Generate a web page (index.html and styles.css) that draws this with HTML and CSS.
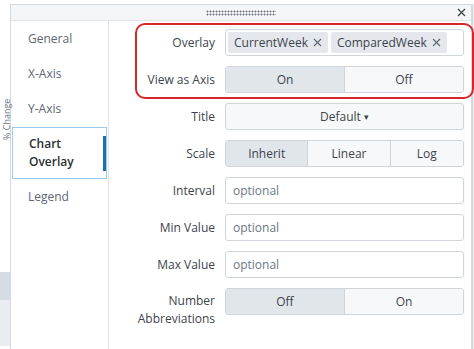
FILE: index.html
```html
<!DOCTYPE html>
<html lang="en">

<head>
    <meta charset="UTF-8">
    <title>Chart Overlay settings</title>
    <link rel="stylesheet" href="styles.css">
</head>

<body>
    <div class="page">
        <div class="gutter-left">
            <span class="axis-title">% Change</span>
            <div class="gutter-rows">
                <div class="gutter-row dark"></div>
                <div class="gutter-row"></div>
            </div>
        </div>

        <div class="dialog">
            <div class="dialog-header">
                <span class="grip"></span>
                <svg class="close" width="9" height="9" viewBox="0 0 9 9">
                    <path d="M1 1L8 8M8 1L1 8" stroke="#3c444d" stroke-width="1.3" />
                </svg>
            </div>
            <div class="dialog-body">
                <ul class="nav">
                    <li>General</li>
                    <li>X-Axis</li>
                    <li>Y-Axis</li>
                    <li class="active">Chart<br>Overlay</li>
                    <li>Legend</li>
                </ul>

                <div class="form">
                    <div class="highlight"></div>

                    <div class="row">
                        <label>Overlay</label>
                        <div class="tags">
                            <span class="tag">CurrentWeek
                                <svg width="9" height="9" viewBox="0 0 9 9"><path d="M1 1L8 8M8 1L1 8" stroke="#5c6773" stroke-width="1.1" /></svg>
                            </span>
                            <span class="tag">ComparedWeek
                                <svg width="9" height="9" viewBox="0 0 9 9"><path d="M1 1L8 8M8 1L1 8" stroke="#5c6773" stroke-width="1.1" /></svg>
                            </span>
                        </div>
                    </div>
                    <div class="row">
                        <label>View as Axis</label>
                        <div class="toggle">
                            <button class="selected">On</button>
                            <button>Off</button>
                        </div>
                    </div>
                    <div class="row">
                        <label>Title</label>
                        <button class="dropdown">Default <span class="caret">&#9662;</span></button>
                    </div>
                    <div class="row">
                        <label>Scale</label>
                        <div class="toggle three">
                            <button class="selected">Inherit</button>
                            <button>Linear</button>
                            <button>Log</button>
                        </div>
                    </div>
                    <div class="row">
                        <label>Interval</label>
                        <input class="text-input" placeholder="optional">
                    </div>
                    <div class="row">
                        <label>Min Value</label>
                        <input class="text-input" placeholder="optional">
                    </div>
                    <div class="row">
                        <label>Max Value</label>
                        <input class="text-input" placeholder="optional">
                    </div>
                    <div class="row">
                        <label class="two-line">Number<br>Abbreviations</label>
                        <div class="toggle">
                            <button class="selected">Off</button>
                            <button>On</button>
                        </div>
                    </div>
                </div>
            </div>
        </div>

        <div class="gutter-right"></div>
    </div>
</body>

</html>
```

FILE: styles.css
```css
body {
    margin: 0;
    font-family: 'Open Sans', Lato, Arial, sans-serif;
    font-size: 12px;
    color: #3c444d;
    background: #fff;
    overflow: hidden;
}

.page {
    display: flex;
    height: 349px;
    padding-top: 4px;
    box-sizing: border-box;
}

.gutter-left {
    width: 10px;
    flex: none;
    display: flex;
    flex-direction: column;
}

.axis-title {
    writing-mode: vertical-rl;
    transform: rotate(180deg);
    font-size: 9px;
    color: #6b7785;
    margin: 90px 0 0 0;
    height: 46px;
    white-space: nowrap;
}

.gutter-rows {
    margin-top: 132px;
    display: flex;
    flex-direction: column;
}

.gutter-row {
    height: 46px;
    background: #e9edf1;
}

.gutter-row.dark {
    height: 28px;
    background: #d6dce3;
}

.gutter-right {
    flex: 1;
    background: #eef0f2;
    border-left: 1px solid #d3d8dd;
}

.dialog {
    width: 460px;
    flex: none;
    border: 1px solid #d5dade;
    border-bottom: none;
    display: flex;
    flex-direction: column;
}

.dialog-header {
    height: 15px;
    background: #f4f5f7;
    border-bottom: 1px solid #e1e5e9;
    display: flex;
    align-items: center;
    justify-content: center;
    position: relative;
}

.grip {
    width: 70px;
    height: 6px;
    background-image: radial-gradient(circle, #6f7882 0.9px, transparent 1.1px);
    background-size: 3px 3px;
}

.close {
    position: absolute;
    right: 5px;
    top: 3px;
}

.dialog-body {
    flex: 1;
    display: flex;
}

.nav {
    list-style: none;
    margin: 0;
    padding: 0;
    width: 97px;
    flex: none;
    border-right: 1px solid #e1e5e9;
}

.nav li {
    height: 35px;
    line-height: 35px;
    padding-left: 17px;
    color: #5c6773;
}

.nav li.active {
    height: auto;
    line-height: 18px;
    padding: 7px 0 7px 16px;
    margin: 1px 1px 0 1px;
    border: 1px solid #9ccaf0;
    color: #2b3033;
    font-weight: 600;
    position: relative;
}

.nav li.active::after {
    content: '';
    position: absolute;
    right: 0;
    top: 8px;
    bottom: 7px;
    width: 3px;
    background: #1a6fb5;
}

.form {
    flex: 1;
    padding: 8px 7px 0 0;
    position: relative;
}

.highlight {
    position: absolute;
    left: 26px;
    right: -3px;
    top: 2px;
    height: 72px;
    border: 2px solid #d6262b;
    border-radius: 10px;
}

.row {
    display: flex;
    align-items: center;
    gap: 10px;
    height: 27px;
    margin-bottom: 10px;
}

.row label {
    width: 106px;
    flex: none;
    text-align: right;
}

.row label.two-line {
    line-height: 18px;
    align-self: flex-start;
    margin-top: 4px;
}

.tags {
    flex: 1;
    height: 27px;
    box-sizing: border-box;
    border: 1px solid #d0d6dc;
    border-radius: 3px;
    padding: 2px;
    display: flex;
    gap: 3px;
}

.tag {
    background: #e4e8ec;
    border-radius: 2px;
    padding: 0 6px;
    line-height: 21px;
    white-space: nowrap;
    display: flex;
    align-items: center;
    gap: 5px;
}

.toggle {
    flex: 1;
    height: 27px;
    display: flex;
    border: 1px solid #cfd5db;
    border-radius: 3px;
    box-sizing: border-box;
    overflow: hidden;
}

.toggle button {
    flex: 1;
    border: none;
    border-left: 1px solid #cfd5db;
    background: #f7f8fa;
    font: inherit;
    color: #3c444d;
}

.toggle button:first-child {
    border-left: none;
}

.toggle button.selected {
    background: #e1e6eb;
}

.toggle.three button:last-child {
    flex: 0.87;
}

.dropdown {
    flex: 1;
    height: 27px;
    border: 1px solid #cfd5db;
    border-radius: 3px;
    background: #f7f8fa;
    font: inherit;
    color: #3c444d;
}

.caret {
    font-size: 9px;
    vertical-align: 1px;
}

.text-input {
    flex: 1;
    min-width: 0;
    height: 27px;
    box-sizing: border-box;
    border: 1px solid #cfd5db;
    border-radius: 3px;
    padding: 0 7px;
    font: inherit;
    color: #3c444d;
}

.text-input::placeholder {
    color: #6b7785;
}
```
